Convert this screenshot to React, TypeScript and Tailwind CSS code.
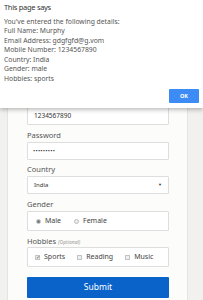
const font = { fontFamily: '"Noto Sans", "Open Sans", sans-serif' }

function Label({ text }: { text: string }) {
  return <div className="mb-[2px] text-[7.5px] leading-[10px] text-[#555]">{text}</div>
}

function Box({ children, className = '' }: { children: React.ReactNode; className?: string }) {
  return (
    <div className={`flex items-center rounded-[1px] border border-[#dedede] bg-white ${className}`}>
      {children}
    </div>
  )
}

function Radio({ checked }: { checked?: boolean }) {
  return (
    <span className="flex h-[5px] w-[5px] items-center justify-center rounded-full border border-[#bbb] bg-[#eee]">
      {checked && <span className="h-[3px] w-[3px] rounded-full bg-[#777]" />}
    </span>
  )
}

function Check({ checked }: { checked?: boolean }) {
  return (
    <span className="flex h-[5px] w-[5px] items-center justify-center border border-[#c4c4c4] bg-[#eee] text-[5px] leading-none text-[#555]">
      {checked && '✓'}
    </span>
  )
}

export default function App() {
  return (
    <div className="relative h-[300px] w-[203px] overflow-hidden bg-[#f1f1f0]" style={font}>
      <div className="ml-[7px] h-full w-[181px] border-x border-[#e4e4e2] bg-[#fcfcfa] pl-[19px] pr-[18px] pt-[107px]">
        <Box className="h-[18px] px-[6px] text-[6.5px] text-[#333]">1234567890</Box>

        <div className="mt-[5px]">
          <Label text="Password" />
          <Box className="h-[18px] px-[5px] text-[6px] tracking-[0.2px] text-[#333]">•••••••••</Box>
        </div>

        <div className="mt-[4px]">
          <Label text="Country" />
          <Box className="h-[18px] justify-between px-[6px] text-[6px] text-[#333]">
            <span>India</span>
            <span className="text-[4px]">▼</span>
          </Box>
        </div>

        <div className="mt-[5px]">
          <Label text="Gender" />
          <Box className="h-[20px] gap-[4px] pl-[8px] text-[7px] text-[#444]">
            <Radio checked />
            <span className="mr-[9px]">Male</span>
            <Radio />
            <span>Female</span>
          </Box>
        </div>

        <div className="mt-[5px]">
          <div className="text-[7.5px] leading-[10px] text-[#555]">
            Hobbies<span className="ml-[2px] text-[5px] italic text-[#999]">(Optional)</span>
          </div>
          <Box className="h-[20px] gap-[4px] pl-[7px] text-[7px] text-[#444]">
            <Check checked />
            <span className="mr-[8px]">Sports</span>
            <Check />
            <span className="mr-[8px]">Reading</span>
            <Check />
            <span>Music</span>
          </Box>
        </div>

        <button className="mt-[10px] flex h-[21px] w-full items-center justify-center rounded-[1px] bg-[#0a63c9] text-[8.5px] text-white">
          Submit
        </button>
      </div>

      <div className="absolute left-0 top-0 h-[108px] w-full bg-white px-[4px] pt-[2px] shadow-[0_2px_4px_rgba(0,0,0,0.25)]">
        <div className="text-[7.5px] leading-[10px] tracking-[-0.3px] text-[#333]">This page says</div>
        <div className="mt-[4.5px] text-[6.8px] leading-[9.5px] text-[#555]">
          <div>You've entered the following details:</div>
          <div>Full Name: Murphy</div>
          <div>Email Address: gdgfgfd@g.vom</div>
          <div>Mobile Number: 1234567890</div>
          <div>Country: India</div>
          <div>Gender: male</div>
          <div>Hobbies: sports</div>
        </div>
        <div className="mt-[6px] flex justify-end">
          <button className="flex h-[14px] w-[30px] items-center justify-center rounded-[1px] bg-[#3d8bf4] text-[5.5px] font-bold text-white">
            OK
          </button>
        </div>
      </div>
    </div>
  )
}
